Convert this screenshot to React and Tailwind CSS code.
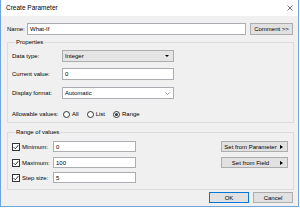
import React from "react";

const font = { fontFamily: '"Liberation Sans", Arial, sans-serif' };

function TextBox({ value, className = "" }) {
  return (
    <div
      className={`flex items-center bg-white border border-[#abadb3] pl-[2px] text-[6px] text-black ${className}`}
    >
      {value}
    </div>
  );
}

function Button({ children, className = "", arrow = false, primary = false }) {
  return (
    <div
      className={`relative flex items-center justify-center bg-[#e1e1e1] border text-[6px] text-black ${
        primary ? "border-[#0078d7]" : "border-[#adadad]"
      } ${className}`}
    >
      {children}
      {arrow && (
        <span className="absolute right-[4px] top-[3px] w-0 h-0 border-y-[2.5px] border-y-transparent border-l-[3px] border-l-black"></span>
      )}
    </div>
  );
}

function Radio({ checked, label }) {
  return (
    <div className="flex items-center gap-[2px]">
      <span className="flex items-center justify-center w-[7px] h-[7px] rounded-full border border-[#333] bg-white">
        {checked && <span className="w-[3px] h-[3px] rounded-full bg-[#333]"></span>}
      </span>
      <span>{label}</span>
    </div>
  );
}

function Check() {
  return (
    <span className="flex items-center justify-center w-[8px] h-[8px] border border-[#333] bg-white">
      <svg width="6" height="6" viewBox="0 0 6 6">
        <path d="M0.6 3.1 L2.3 4.8 L5.4 1" fill="none" stroke="#222" strokeWidth="0.9" />
      </svg>
    </span>
  );
}

function RangeRow({ label, value, button }) {
  return (
    <div className="flex items-center h-[11px]">
      <Check />
      <span className="ml-[2px] w-[31px]">{label}</span>
      <TextBox value={value} className="w-[83px] h-[11px]" />
      {button && (
        <Button arrow className="ml-auto w-[67px] h-[11px] pr-[8px]">
          {button}
        </Button>
      )}
    </div>
  );
}

export default function App() {
  return (
    <div className="w-[300px] h-[210px] bg-white text-[6px] text-black leading-none" style={font}>
      <div className="flex flex-col w-[299px] h-[207px] border-x border-b border-[#6ea6da]">
        {/* title bar */}
        <div className="flex items-center justify-between h-[16px] bg-white pl-[5px] pr-[5px] text-[6.5px]">
          <span>Create Parameter</span>
          <svg width="6" height="6" viewBox="0 0 6 6">
            <path d="M0.5 0.5 L5.5 5.5 M5.5 0.5 L0.5 5.5" stroke="#333" strokeWidth="0.7" />
          </svg>
        </div>

        {/* body */}
        <div className="flex-1 flex flex-col bg-[#f0f0f0] pl-[6px] pt-[7px]">
          <div className="flex items-center h-[12px]">
            <span className="w-[20px]">Name:</span>
            <TextBox value="What-If" className="w-[219px] h-[12px]" />
            <Button className="ml-[4px] w-[43px] h-[12px]">Comment &gt;&gt;</Button>
          </div>

          <fieldset className="mt-[3px] w-[287px] border border-[#dcdcdc] pl-[4px] pb-[2px]">
            <legend className="ml-[3px] px-[1px] h-[8px] leading-[8px]">Properties</legend>
            <div className="flex flex-col mt-[4px]">
              <div className="flex items-center h-[12px]">
                <span className="w-[50px]">Data type:</span>
                <div className="flex items-center justify-between w-[112px] h-[12px] bg-[#e5e5e5] border border-[#adadad] pl-[2px] pr-[4px]">
                  <span>Integer</span>
                  <span className="w-0 h-0 border-x-[2px] border-x-transparent border-t-[2.5px] border-t-black"></span>
                </div>
              </div>
              <div className="flex items-center h-[12px] mt-[6px]">
                <span className="w-[50px]">Current value:</span>
                <TextBox value="0" className="w-[112px] h-[12px]" />
              </div>
              <div className="flex items-center h-[12px] mt-[7px]">
                <span className="w-[50px]">Display format:</span>
                <div className="flex items-center justify-between w-[112px] h-[12px] bg-white border border-[#abadb3] pl-[2px] pr-[3px]">
                  <span>Automatic</span>
                  <svg width="5" height="3" viewBox="0 0 5 3">
                    <path d="M0.5 0.5 L2.5 2.5 L4.5 0.5" fill="none" stroke="#777" strokeWidth="0.7" />
                  </svg>
                </div>
              </div>
              <div className="flex items-center h-[12px] mt-[9px]">
                <span className="w-[50px]">Allowable values:</span>
                <div className="flex items-center gap-[8px] ml-[1px]">
                  <Radio label="All" />
                  <Radio label="List" />
                  <Radio checked label="Range" />
                </div>
              </div>
            </div>
          </fieldset>

          <fieldset className="mt-[5px] w-[287px] border border-[#dcdcdc] pl-[4px] pr-[5px] pb-[6px]">
            <legend className="ml-[3px] px-[1px] h-[8px] leading-[8px]">Range of values</legend>
            <div className="flex flex-col mt-[5px]">
              <RangeRow label="Minimum:" value="0" button="Set from Parameter" />
              <div className="mt-[5px]">
                <RangeRow label="Maximum:" value="100" button="Set from Field" />
              </div>
              <div className="mt-[4px]">
                <RangeRow label="Step size:" value="5" />
              </div>
            </div>
          </fieldset>

          <div className="flex justify-end gap-[4px] mt-[2px] w-[286px]">
            <Button primary className="w-[40px] h-[11px]">OK</Button>
            <Button className="w-[40px] h-[11px]">Cancel</Button>
          </div>
        </div>
      </div>
    </div>
  );
}
